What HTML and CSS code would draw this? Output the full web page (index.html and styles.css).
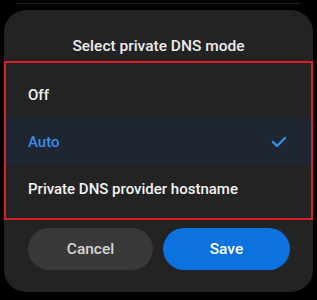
FILE: index.html
```html
<!DOCTYPE html>
<html lang="en">
<head>
    <meta charset="UTF-8">
    <meta name="viewport" content="width=device-width, initial-scale=1.0">
    <title>Select private DNS mode</title>
    <link rel="stylesheet" href="styles.css">
</head>
<body>
    <div class="prev-edge"></div>

    <div class="dialog">
        <h1 class="dialog-title">Select private DNS mode</h1>

        <div class="option-list">
            <div class="option">Off</div>
            <div class="option selected">
                <span>Auto</span>
                <svg class="check" width="16" height="12" viewBox="0 0 16 12">
                    <polyline points="2,6 6,10 14,2" fill="none" stroke="#3a8ee8" stroke-width="2.4" stroke-linecap="round" stroke-linejoin="round"/>
                </svg>
            </div>
            <div class="option">Private DNS provider hostname</div>
        </div>

        <div class="actions">
            <button class="btn btn-cancel">Cancel</button>
            <button class="btn btn-save">Save</button>
        </div>
    </div>
</body>
</html>
```

FILE: styles.css
```css
* {
    margin: 0;
    padding: 0;
    box-sizing: border-box;
}

body {
    font-family: Roboto, "Liberation Sans", sans-serif;
    background: #000;
    width: 317px;
    height: 300px;
    overflow: hidden;
    padding-top: 3px;
}

.prev-edge {
    height: 1px;
    margin: 0 16px;
    background: #1e1e1e;
}

.dialog {
    margin: 6px 4px 0;
    height: 282px;
    background: #232323;
    border-radius: 22px;
    overflow: hidden;
}

.dialog-title {
    color: #ececec;
    font-size: 15.5px;
    font-weight: 500;
    text-align: center;
    padding-top: 27px;
    height: 51px;
    line-height: 18px;
}

.option-list {
    border: 2px solid #d8202c;
    padding: 8px 0 6px;
}

.option {
    height: 47px;
    display: flex;
    align-items: center;
    justify-content: space-between;
    padding: 0 24px 0 22px;
    color: #f2f2f2;
    font-size: 15px;
    font-weight: 500;
}

.option.selected {
    background: #1d2632;
    color: #3a8ee8;
}

.check {
    display: block;
}

.actions {
    display: flex;
    gap: 10px;
    padding: 8px 23px 0 24px;
}

.btn {
    height: 42px;
    border: none;
    border-radius: 21px;
    font-family: Roboto, "Liberation Sans", sans-serif;
    font-size: 15.5px;
    font-weight: 500;
}

.btn-cancel {
    width: 125px;
    background: #393939;
    color: #d6d6d6;
}

.btn-save {
    width: 127px;
    background: #0b72e0;
    color: #fff;
}
```
